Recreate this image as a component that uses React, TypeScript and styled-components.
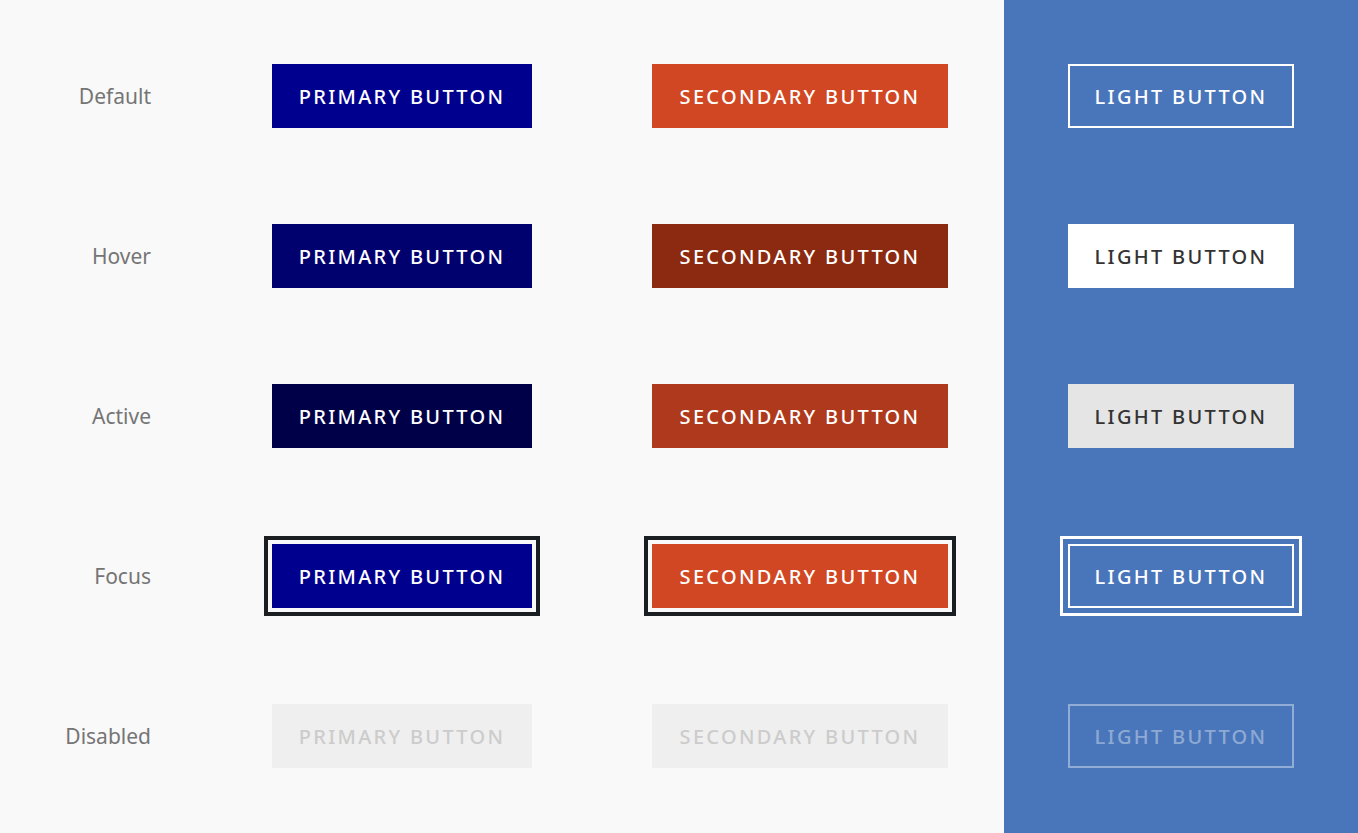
import React from 'react';
import styled, { createGlobalStyle, css } from 'styled-components';

type Kind = 'primary' | 'secondary' | 'light';
type State = 'default' | 'hover' | 'active' | 'focus' | 'disabled';

const GlobalStyle = createGlobalStyle`
    html, body {
        margin: 0;
        padding: 0;
        background: #f9f9f9;
    }
    body {
        font-family: "Noto Sans", "Open Sans", sans-serif;
    }
`;

const Page = styled.div`
    display: flex;
    width: 1358px;
    height: 833px;
    overflow: hidden;
`;

const LeftPanel = styled.section`
    width: 1004px;
    background: #f9f9f9;
    padding-top: 64px;
    box-sizing: border-box;
`;

const StateGrid = styled.div`
    display: grid;
    grid-template-columns: 152px 260px 296px;
    grid-auto-rows: 64px;
    column-gap: 120px;
    row-gap: 96px;
    align-items: center;
`;

const StateLabel = styled.div`
    text-align: right;
    color: #757575;
    font-size: 21px;
    padding-right: 1px;
`;

const LightPanel = styled.section`
    flex: 1;
    background: #4976ba;
    padding-top: 64px;
    display: flex;
    flex-direction: column;
    align-items: center;
    gap: 96px;
`;

const palette = {
    primary: {
        default: '#00008f',
        hover: '#00006e',
        active: '#000048',
    },
    secondary: {
        default: '#d24723',
        hover: '#8b2a10',
        active: '#af391c',
    },
};

const Button = styled.button<{ $kind: Kind; $state: State; $width: number }>`
    width: ${(p) => p.$width}px;
    height: 64px;
    box-sizing: border-box;
    border: none;
    margin: 0;
    padding: 0;
    font-family: "Noto Sans", "Open Sans", sans-serif;
    font-weight: 500;
    font-size: 20px;
    letter-spacing: 2.3px;
    text-transform: uppercase;
    cursor: pointer;
    display: flex;
    align-items: center;
    justify-content: center;
    color: #fff;

    ${(p) =>
        p.$kind !== 'light' &&
        css`
            background: ${p.$state === 'disabled'
                ? '#efefef'
                : palette[p.$kind][p.$state === 'focus' ? 'default' : p.$state]};
            ${p.$state === 'disabled' && 'color: #cccccc;'}
            ${p.$state === 'focus' && 'box-shadow: 0 0 0 4px #f9f9f9, 0 0 0 8px #1b1f21;'}
        `}

    ${(p) =>
        p.$kind === 'light' &&
        css`
            background: transparent;
            border: 2px solid #fff;
            ${p.$state === 'hover' && 'background: #fff; color: #333;'}
            ${p.$state === 'active' && 'background: #e5e5e5; border-color: #e5e5e5; color: #333;'}
            ${p.$state === 'focus' && 'box-shadow: 0 0 0 5px #4976ba, 0 0 0 8px #fff;'}
            ${p.$state === 'disabled' &&
            'border-color: rgba(255,255,255,0.4); color: rgba(255,255,255,0.4);'}
        `}
`;

const states: { state: State; label: string }[] = [
    { state: 'default', label: 'Default' },
    { state: 'hover', label: 'Hover' },
    { state: 'active', label: 'Active' },
    { state: 'focus', label: 'Focus' },
    { state: 'disabled', label: 'Disabled' },
];

const App: React.FC = () => {
    return (
        <>
            <GlobalStyle />
            <Page>
                <LeftPanel>
                    <StateGrid>
                        {states.map(({ state, label }) => (
                            <React.Fragment key={state}>
                                <StateLabel>{label}</StateLabel>
                                <Button $kind='primary' $state={state} $width={260}>
                                    Primary Button
                                </Button>
                                <Button $kind='secondary' $state={state} $width={296}>
                                    Secondary Button
                                </Button>
                            </React.Fragment>
                        ))}
                    </StateGrid>
                </LeftPanel>
                <LightPanel>
                    {states.map(({ state }) => (
                        <Button key={state} $kind='light' $state={state} $width={226}>
                            Light Button
                        </Button>
                    ))}
                </LightPanel>
            </Page>
        </>
    );
};

export default App;
